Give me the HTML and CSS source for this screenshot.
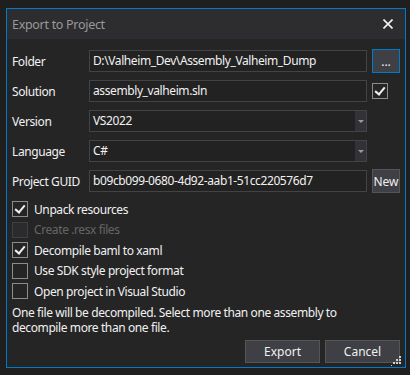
FILE: index.html
```html
<!doctype html>
<html lang="en">
  <head>
    <meta charset="UTF-8" />
    <title>Export to Project</title>
    <link rel="stylesheet" href="styles.css">
  </head>
  <body>
    <div class="window">
      <div class="titlebar">
        <span class="title">Export to Project</span>
        <svg class="close" width="10" height="10" viewBox="0 0 10 10">
          <path d="M0.5 0.5 L9.5 9.5 M9.5 0.5 L0.5 9.5" stroke="#f1f1f1" stroke-width="1.6" />
        </svg>
      </div>

      <div class="content">
        <div class="form">
          <label>Folder</label>
          <div class="input">D:\Valheim_Dev\Assembly_Valheim_Dump</div>
          <button class="btn small focused">...</button>

          <label>Solution</label>
          <div class="input">assembly_valheim.sln</div>
          <span class="check on"></span>

          <label>Version</label>
          <div class="input select">
            <span>VS2022</span>
            <span class="arrow"></span>
          </div>
          <span></span>

          <label>Language</label>
          <div class="input select">
            <span>C#</span>
            <span class="arrow"></span>
          </div>
          <span></span>

          <label>Project GUID</label>
          <div class="input">b09cb099-0680-4d92-aab1-51cc220576d7</div>
          <button class="btn small">New</button>
        </div>

        <ul class="options">
          <li><span class="check on"></span>Unpack resources</li>
          <li class="disabled"><span class="check"></span>Create .resx files</li>
          <li><span class="check on"></span>Decompile baml to xaml</li>
          <li><span class="check"></span>Use SDK style project format</li>
          <li><span class="check"></span>Open project in Visual Studio</li>
        </ul>

        <p class="note">One file will be decompiled. Select more than one assembly to decompile more than one file.</p>

        <div class="actions">
          <button class="btn">Export</button>
          <button class="btn">Cancel</button>
        </div>
      </div>

      <svg class="grip" width="10" height="10" viewBox="0 0 10 10">
        <rect x="8" y="0" width="2" height="2" fill="#d0d0d0" />
        <rect x="5" y="3" width="2" height="2" fill="#d0d0d0" />
        <rect x="8" y="3" width="2" height="2" fill="#d0d0d0" />
        <rect x="2" y="6" width="2" height="2" fill="#d0d0d0" />
        <rect x="5" y="6" width="2" height="2" fill="#d0d0d0" />
        <rect x="8" y="6" width="2" height="2" fill="#d0d0d0" />
        <rect x="0" y="9" width="1" height="1" fill="#d0d0d0" />
      </svg>
    </div>
  </body>
</html>
```

FILE: styles.css
```css
body {
  margin: 0;
  background: #1f1f1f;
  font-family: "Noto Sans", "Open Sans", sans-serif;
  font-size: 12px;
  letter-spacing: -0.4px;
  color: #f1f1f1;
}
.window {
  position: relative;
  margin: 8px 0 0 6px;
  width: 398px;
  height: 358px;
  border: 1px solid #007acc;
  background: #252526;
}
.titlebar {
  height: 30px;
  background: #2d2d30;
  display: flex;
  align-items: center;
  justify-content: space-between;
  padding: 0 12px 0 5px;
}
.title {
  color: #999999;
  font-size: 12.5px;
  letter-spacing: -0.3px;
}
.close {
  margin-top: -1px;
}
.content {
  padding: 10px 5px 0 5px;
}
.form {
  display: grid;
  grid-template-columns: 72px 278px 28px;
  column-gap: 5px;
  grid-auto-rows: 24px;
  row-gap: 6px;
  align-items: center;
}
.input {
  height: 20px;
  line-height: 20px;
  border: 1px solid #434346;
  background: #222222;
  padding: 0 3px;
  white-space: nowrap;
  overflow: hidden;
}
.select {
  display: flex;
  justify-content: space-between;
  padding-right: 0;
}
.arrow {
  width: 11px;
  height: 20px;
  background: #333337;
  position: relative;
}
.arrow::after {
  content: "";
  position: absolute;
  left: 3px;
  top: 9px;
  border-left: 3px solid transparent;
  border-right: 3px solid transparent;
  border-top: 3px solid #9a9a9a;
}
.btn {
  font: inherit;
  color: #f1f1f1;
  background: #3f3f46;
  border: 1px solid #555555;
  height: 24px;
  padding: 0;
  cursor: pointer;
}
.btn.small {
  width: 28px;
}
.btn.focused {
  border-color: #007acc;
}
.check {
  display: inline-block;
  box-sizing: border-box;
  width: 16px;
  height: 16px;
  border: 1px solid #8c8c8c;
  background: #252526;
  position: relative;
}
.check.on::after {
  content: "";
  position: absolute;
  left: 4px;
  top: 1px;
  width: 4px;
  height: 8px;
  border-right: 2px solid #f1f1f1;
  border-bottom: 2px solid #f1f1f1;
  transform: rotate(40deg);
}
.options {
  list-style: none;
  margin: 6px 0 0;
  padding: 0;
}
.options li {
  display: flex;
  align-items: center;
  gap: 6px;
  height: 20.5px;
}
.options li.disabled {
  color: #656565;
}
.options li.disabled .check {
  border-color: #3f3f46;
  background: #2b2b2e;
}
.note {
  margin: 3px 0 0;
  line-height: 15px;
  width: 345px;
}
.actions {
  display: flex;
  justify-content: flex-end;
  gap: 5px;
  margin-top: 5px;
}
.actions .btn {
  width: 75px;
  height: 23px;
}
.grip {
  position: absolute;
  right: 4px;
  bottom: 1px;
}
```
